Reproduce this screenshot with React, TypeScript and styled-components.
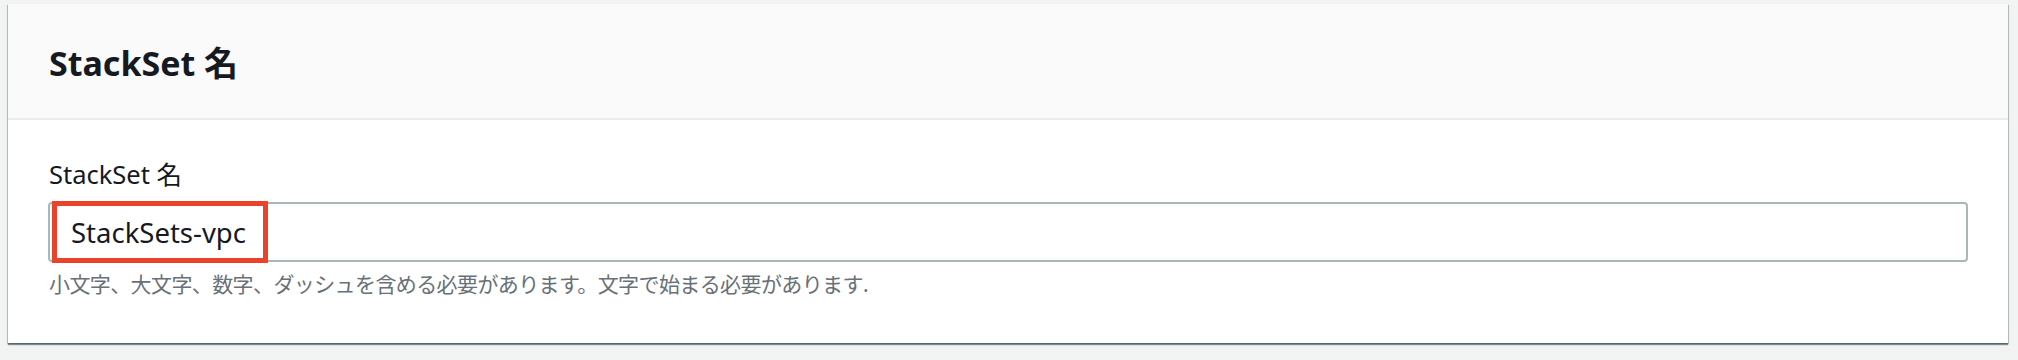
import React from "react";
import styled, { createGlobalStyle } from "styled-components";

const Global = createGlobalStyle`
  html, body { margin: 0; padding: 0; background: #f2f3f3; }
  body { font-family: "Noto Sans", "Noto Sans CJK JP", sans-serif; color: #16191f; }
  * { box-sizing: border-box; }
`;

const Page = styled.div`
  padding: 4px 10px 0 8px;
  width: 2018px;
  height: 360px;
`;

const Card = styled.section`
  background: #ffffff;
  box-shadow: 0 2px 1px 0 rgba(0, 28, 36, 0.45), 1px 1px 1px 0 rgba(0, 28, 36, 0.2),
    -1px 1px 1px 0 rgba(0, 28, 36, 0.2);
`;

const Header = styled.header`
  height: 116px;
  display: flex;
  align-items: center;
  padding: 0 40px 0 41px;
  background: #fafafa;
  border-bottom: 2px solid #eaeded;
`;

const Title = styled.h2`
  margin: 0;
  font-size: 34px;
  font-weight: 700;
  color: #16191f;
`;

const Body = styled.div`
  padding: 36px 40px 44px 40px;
`;

const Label = styled.label`
  display: block;
  font-size: 25.5px;
  line-height: 36px;
  color: #16191f;
  padding-left: 1px;
`;

const InputWrap = styled.div`
  position: relative;
  margin-top: 10px;
`;

const Input = styled.div`
  height: 60px;
  border: 2px solid #aab7b8;
  border-radius: 4px;
  display: flex;
  align-items: center;
  padding-left: 21px;
  font-size: 27.5px;
  color: #16191f;
`;

const Highlight = styled.div`
  position: absolute;
  left: 4px;
  top: -1px;
  width: 216px;
  height: 62px;
  border: 5px solid #e9432b;
  pointer-events: none;
`;

const Help = styled.p`
  margin: 7px 0 0 0;
  padding-left: 1px;
  font-size: 21px;
  letter-spacing: -0.6px;
  line-height: 30px;
  color: #687078;
`;

export default function App() {
  return (
    <>
      <Global />
      <Page>
        <Card>
          <Header>
            <Title>StackSet 名</Title>
          </Header>
          <Body>
            <Label>StackSet 名</Label>
            <InputWrap>
              <Input>StackSets-vpc</Input>
              <Highlight />
            </InputWrap>
            <Help>
              小文字、大文字、数字、ダッシュを含める必要があります。文字で始まる必要があります.
            </Help>
          </Body>
        </Card>
      </Page>
    </>
  );
}
